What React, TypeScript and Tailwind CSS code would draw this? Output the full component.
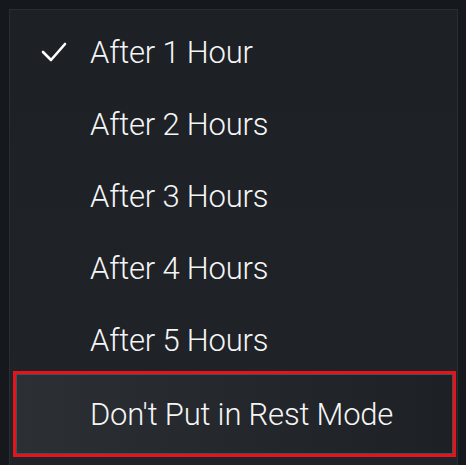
const options = [
  "After 1 Hour",
  "After 2 Hours",
  "After 3 Hours",
  "After 4 Hours",
  "After 5 Hours",
  "Don't Put in Rest Mode",
];

export default function App() {
  const selected = 0;
  const focused = 5;

  return (
    <div className="h-[465px] w-[466px] overflow-hidden bg-[#15181d] pl-[9px] pr-[8px] pt-[9px]">
      <div
        className="h-full w-full overflow-hidden border-l border-r border-t border-[#2a2e33] bg-gradient-to-b from-[#1d2024] to-[#202327] pt-[6px]"
        style={{ fontFamily: 'Roboto, "Open Sans", sans-serif' }}
      >
        {options.map((label, i) => (
          <div
            key={label}
            className={
              i === focused
                ? "-mt-[5px] ml-[3px] mr-[1px] flex h-[86px] items-center border-[3px] border-[#e3141c] bg-gradient-to-r from-[#2c3035] via-[#24272b] to-[#1d2024] pl-[74px] shadow-[inset_0_0_0_1px_#4a4e54]"
                : "flex h-[72px] items-center"
            }
          >
            {i !== focused && (
              <div className="flex w-[80px] shrink-0 items-center pl-[31px]">
                {i === selected && (
                  <svg width="26" height="20" viewBox="0 0 26 20" fill="none">
                    <path
                      d="M2 10 L10 18 L24 2"
                      stroke="#ffffff"
                      strokeWidth="2.6"
                      strokeLinecap="round"
                      strokeLinejoin="round"
                    />
                  </svg>
                )}
              </div>
            )}
            <span className="text-[31px] font-light leading-none tracking-[-0.2px] text-[#f4f5f6]">
              {label}
            </span>
          </div>
        ))}
      </div>
    </div>
  );
}
